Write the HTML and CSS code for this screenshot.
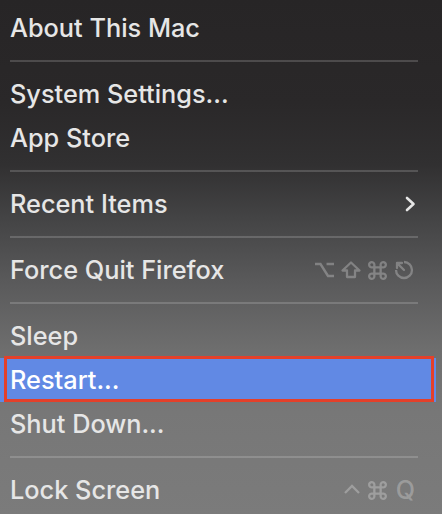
FILE: index.html
```html
<!DOCTYPE html>
<html lang="en">
<head>
<meta charset="utf-8">
<title>Apple menu</title>
<link rel="stylesheet" href="styles.css">
</head>
<body>
<div class="menu">
  <div class="item"><span class="label">About This Mac</span></div>
  <div class="sep"></div>
  <div class="item"><span class="label">System Settings...</span></div>
  <div class="item"><span class="label">App Store</span></div>
  <div class="sep"></div>
  <div class="item">
    <span class="label">Recent Items</span>
    <svg class="chev" width="12" height="18" viewBox="0 0 12 18"><path d="M3 3 L9.5 9 L3 15" fill="none" stroke="currentColor" stroke-width="2.6" stroke-linecap="round" stroke-linejoin="round"/></svg>
  </div>
  <div class="sep"></div>
  <div class="item">
    <span class="label">Force Quit Firefox</span>
    <span class="keys">
      <svg class="key" width="21" height="20" viewBox="0 0 21 20"><path d="M1 4 H6.5 L14 16 H20 M12.5 4 H20" fill="none" stroke="currentColor" stroke-width="2.4"/></svg>
      <svg class="key" width="22" height="20" viewBox="0 0 22 20"><path d="M11 2.5 L19.5 10.5 H15 V17 H7 V10.5 H2.5 Z" fill="none" stroke="currentColor" stroke-width="2.3" stroke-linejoin="round"/></svg>
      <svg class="key" width="21" height="21" viewBox="0 0 20 20"><path d="M7 7 V5 A2.5 2.5 0 1 0 5 7 H15 A2.5 2.5 0 1 0 13 5 V15 A2.5 2.5 0 1 0 15 13 H5 A2.5 2.5 0 1 0 7 15 Z" fill="none" stroke="currentColor" stroke-width="2.2"/></svg>
      <svg class="key" width="22" height="22" viewBox="0 0 22 22"><path d="M11 3 A8 8 0 1 1 3 11" fill="none" stroke="currentColor" stroke-width="2.3"/><path d="M4 4 L11 11 M4 4 H9 M4 4 V9" fill="none" stroke="currentColor" stroke-width="2.3" stroke-linecap="round"/></svg>
    </span>
  </div>
  <div class="sep"></div>
  <div class="item"><span class="label">Sleep</span></div>
  <div class="item selected"><span class="label">Restart...</span><span class="mark"></span></div>
  <div class="item"><span class="label">Shut Down...</span></div>
  <div class="sep"></div>
  <div class="item">
    <span class="label">Lock Screen</span>
    <span class="keys">
      <svg class="key" width="20" height="20" viewBox="0 0 20 20"><path d="M3 13 L10 6 L17 13" fill="none" stroke="currentColor" stroke-width="2.3"/></svg>
      <svg class="key" width="21" height="21" viewBox="0 0 20 20"><path d="M7 7 V5 A2.5 2.5 0 1 0 5 7 H15 A2.5 2.5 0 1 0 13 5 V15 A2.5 2.5 0 1 0 15 13 H5 A2.5 2.5 0 1 0 7 15 Z" fill="none" stroke="currentColor" stroke-width="2.2"/></svg>
      <span class="keychar">Q</span>
    </span>
  </div>
</div>
</body>
</html>
```

FILE: styles.css
```css
html, body {
  margin: 0;
  padding: 0;
  height: 100%;
}
body {
  background: linear-gradient(180deg,
    #272526 0%,
    #2a2829 20%,
    #313031 32%,
    #434344 42%,
    #5a5a5b 55%,
    #6e6e6e 68%,
    #777777 80%,
    #7b7b7b 100%);
  font-family: Inter, "Noto Sans", sans-serif;
  color: #e6e6e6;
  overflow: hidden;
}
.menu {
  padding-top: 6px;
  display: flex;
  flex-direction: column;
}
.item {
  position: relative;
  height: 44px;
  display: flex;
  align-items: center;
  justify-content: space-between;
  padding: 0 27px 0 10px;
  font-size: 25.3px;
  font-weight: 500;
}
.label {
  line-height: 1;
}
.sep {
  height: 22px;
  display: flex;
  align-items: center;
  margin: 0 24px 0 10px;
}
.sep::before {
  content: "";
  flex: 1;
  height: 2px;
  background: rgba(255, 255, 255, 0.17);
}
.chev {
  color: #e6e6e6;
  margin-right: -1px;
}
.keys {
  display: flex;
  align-items: center;
  gap: 5px;
  color: rgba(255, 255, 255, 0.27);
}
.key {
  display: block;
}
.keychar {
  font-size: 25px;
  line-height: 1;
  margin-left: 3px;
}
.selected {
  background: #6189e4;
  margin-right: 6px;
  color: #ffffff;
}
.mark {
  position: absolute;
  left: 4px;
  right: 2px;
  top: -2px;
  bottom: 0;
  border: 3px solid #e4402a;
  pointer-events: none;
}
```
